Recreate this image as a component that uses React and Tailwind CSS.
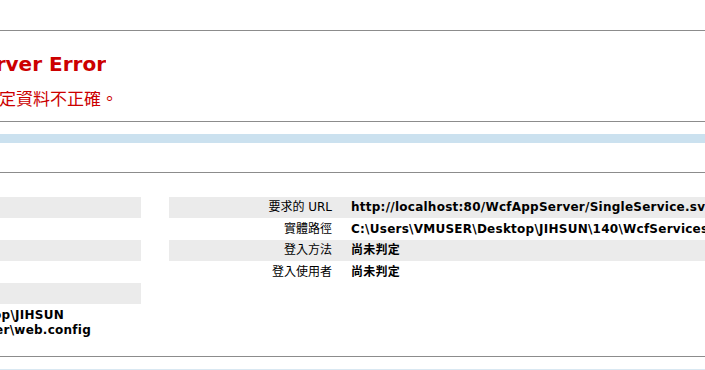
import React from "react"

const font = "font-['DejaVu_Sans','Noto_Sans_CJK_TC',sans-serif]"

function Rule() {
  return <div className="h-px bg-[#8c8c8c]" />
}

// text whose start runs off the left edge of the window
function Clipped({ width, children, className = "" }) {
  return (
    <div className={`flex justify-end overflow-hidden whitespace-nowrap ${className}`} style={{ width }}>
      <span>{children}</span>
    </div>
  )
}

const details = [
  ["要求的 URL", "http://localhost:80/WcfAppServer/SingleService.svc", true],
  ["實體路徑", "C:\\Users\\VMUSER\\Desktop\\JIHSUN\\140\\WcfServices\\SingleService.svc", false],
  ["登入方法", "尚未判定", true],
  ["登入使用者", "尚未判定", false],
]

export default function App() {
  return (
    <div className={`w-[705px] h-[370px] overflow-hidden bg-white text-black ${font}`}>
      <div className="h-[30px]" />
      <Rule />

      <div className="h-[90px] pt-[21px]">
        <Clipped width={106} className="text-[20px] leading-[24px] font-bold text-[#cc0000]">
          HTTP 錯誤 500.19 - Internal Server Error
        </Clipped>
        <Clipped width={118} className="mt-[15px] text-[17px] leading-[17px] text-[#cc0000]">
          無法存取要求的頁面，因為該頁面的相關設定資料不正確。
        </Clipped>
      </div>
      <Rule />

      <div className="h-[12px]" />
      <div className="h-[9px] bg-[#cbe1ef]" />
      <div className="h-[29px]" />
      <Rule />

      <div className="h-[183px] pt-[24px] flex gap-[28px] text-[12px] leading-[15px]">
        <div className="w-[141px] shrink-0 flex flex-col">
          <div className="h-[21px] bg-[#ebebeb]" />
          <div className="h-[22px]" />
          <div className="h-[21px] bg-[#ebebeb]" />
          <div className="h-[22px]" />
          <div className="h-[21px] bg-[#ebebeb]" />
          <div className="pt-[4px] font-bold tracking-[0.25px]">
            <Clipped width={64}>{"\\\\?\\C:\\Users\\VMUSER\\Desktop\\JIHSUN"}</Clipped>
            <Clipped width={91}>{"\\140\\WcfAppServer\\web.config"}</Clipped>
          </div>
        </div>

        <div className="flex-1 flex flex-col">
          {details.map(([label, value, shaded], i) => (
            <div
              key={label}
              className={`flex items-center whitespace-nowrap ${i % 2 ? "h-[22px]" : "h-[21px]"} ${shaded ? "bg-[#ebebeb]" : ""}`}
            >
              <div className="w-[171px] shrink-0 pr-[8px] text-right">{label}</div>
              <div className="pl-[11px] font-bold tracking-[0.25px]">{value}</div>
            </div>
          ))}
        </div>
      </div>
      <Rule />

      <div className="h-[12px]" />
      <div className="h-px bg-[#d9e8f2]" />
    </div>
  )
}
